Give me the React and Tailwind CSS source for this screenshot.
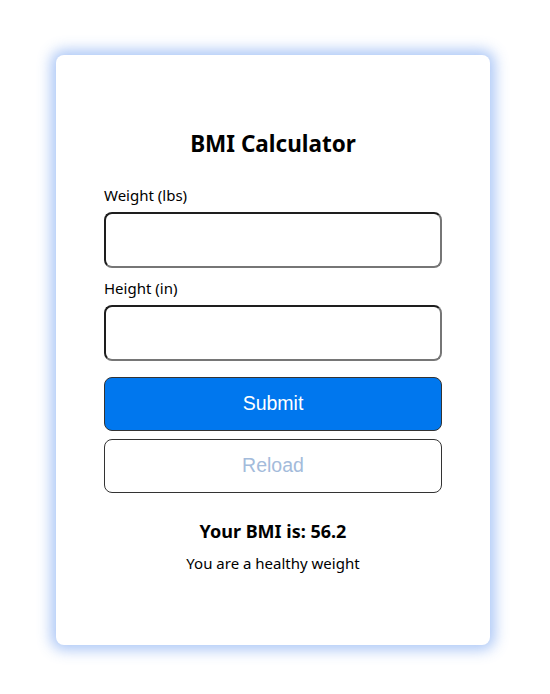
import React, { useState } from 'react';

const App = () => {
  const [weight, setWeight] = useState('');
  const [height, setHeight] = useState('');
  const [bmi, setBmi] = useState('56.2');

  const submit = () => {
    const w = parseFloat(weight);
    const h = parseFloat(height);
    if (w > 0 && h > 0) setBmi(((w / (h * h)) * 703).toFixed(1));
  };

  const inputCls =
    'block w-full h-14 rounded-lg border-2 border-t-[#1e1e1e] border-l-[#1e1e1e] border-b-[#767676] border-r-[#767676] px-3 text-base outline-none bg-white';

  return (
    <div className="min-h-screen bg-white pt-[55px] pl-[56px]" style={{ fontFamily: '"Noto Sans", sans-serif' }}>
      {/* card */}
      <div className="w-[434px] h-[590px] bg-white rounded-lg shadow-[0_0_14px_5px_rgba(70,130,235,0.45)] px-12 pt-[74px] text-black">
        <h1 className="text-[22.5px] leading-[30px] font-bold text-center mb-[26px]">BMI Calculator</h1>

        <label className="block text-[15px] leading-5 mb-[7px]">Weight (lbs)</label>
        <input className={inputCls} value={weight} onChange={(e) => setWeight(e.target.value)} />

        <label className="block text-[15px] leading-5 mt-[10px] mb-[7px]">Height (in)</label>
        <input className={inputCls} value={height} onChange={(e) => setHeight(e.target.value)} />

        <button
          onClick={submit}
          className="block w-full h-[54px] mt-[16px] rounded-lg bg-[#0077ee] border border-[#333] text-white text-[19.5px]"
          style={{ fontFamily: '"Liberation Sans", Arial, sans-serif' }}
        >
          Submit
        </button>
        <button
          onClick={() => { setWeight(''); setHeight(''); }}
          className="block w-full h-[54px] mt-2 rounded-lg bg-white border border-[#333] text-[#a3bbdb] text-[19.5px]"
          style={{ fontFamily: '"Liberation Sans", Arial, sans-serif' }}
        >
          Reload
        </button>

        <h2 className="mt-[25px] text-lg leading-[26px] font-bold text-center">Your BMI is: {bmi}</h2>
        <p className="mt-[9px] text-[15px] leading-5 text-center">You are a healthy weight</p>
      </div>
    </div>
  );
};

export default App;
